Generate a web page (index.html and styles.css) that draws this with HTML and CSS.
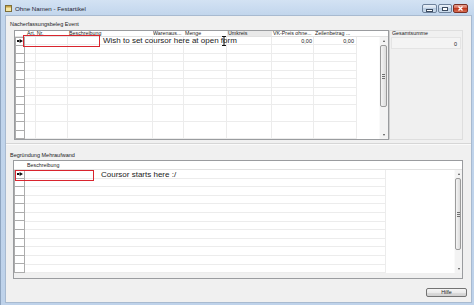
FILE: index.html
```html
<!DOCTYPE html>
<html lang="de">
<head>
    <meta charset="UTF-8">
    <title>Ohne Namen - Festartikel</title>
    <link rel="stylesheet" href="styles.css">
</head>
<body>
    <div class="window">
        <div class="titlebar">
            <svg class="app-icon" width="7" height="7" viewBox="0 0 7 7">
                <rect x="0.5" y="0.5" width="6" height="6" fill="#f5e6a4" stroke="#7d6f3a"/>
                <rect x="1" y="1" width="5" height="1.5" fill="#c7a244"/>
            </svg>
            <span class="title">Ohne Namen - Festartikel</span>
            <div class="caption-buttons">
                <span class="cap cap-min"></span>
                <span class="cap cap-max"></span>
                <span class="cap cap-close">
                    <svg width="5" height="5" viewBox="0 0 5 5"><path d="M0.5 0.5 L4.5 4.5 M4.5 0.5 L0.5 4.5" stroke="#fff" stroke-width="1.3"/></svg>
                </span>
            </div>
        </div>

        <div class="client">
            <div class="group-label first">Nacherfassungsbeleg Event</div>
            <div class="top-row">
                <div class="grid grid-events">
                    <div class="grid-head">
                        <span class="h-rh"></span>
                        <span class="h-art">Art. Nr.</span>
                        <span class="h-desc">Beschreibung</span>
                        <span class="h-ware">Warenaus...</span>
                        <span class="h-menge">Menge</span>
                        <span class="h-umkreis">Umkreis</span>
                        <span class="h-vk">VK-Preis ohne...</span>
                        <span class="h-zeile">Zeilenbetrag ...</span>
                        <span class="h-rest"></span>
                    </div>
                    <div class="grid-main">
                        <div class="rows">
                            <div class="rh-col">
                                <div class="rh current">
                                    <svg width="6" height="4" viewBox="0 0 6 4"><path d="M0 1h2.2v2H0z M2.6 0 L6 2 L2.6 4z" fill="#111"/></svg>
                                </div>
                                <div class="rh"></div><div class="rh"></div><div class="rh"></div>
                                <div class="rh"></div><div class="rh"></div><div class="rh"></div>
                                <div class="rh"></div><div class="rh"></div><div class="rh"></div>
                                <div class="rh"></div><div class="rh"></div>
                            </div>
                            <div class="col c1"></div>
                            <div class="col c2"></div>
                            <div class="col c3"></div>
                            <div class="col c4"></div>
                            <div class="col c5"></div>
                            <div class="col c6"></div>
                            <div class="col c7"><div class="val">0,00</div></div>
                            <div class="col c8"><div class="val">0,00</div></div>
                            <div class="col c9"></div>
                        </div>
                        <div class="vscroll">
                            <div class="vs-arrow up"></div>
                            <div class="vs-thumb"></div>
                            <div class="vs-track"></div>
                            <div class="vs-arrow down"></div>
                        </div>
                    </div>
                </div>
                <div class="sum-panel">
                    <div class="sum-label">Gesamtsumme</div>
                    <div class="sum-field">0</div>
                </div>
            </div>

            <div class="separator"></div>

            <div class="group-label second">Begründung Mehraufwand</div>
            <div class="grid grid-reason">
                <div class="grid-head">
                    <span class="h-rh"></span>
                    <span class="h-text">Beschreibung</span>
                    <span class="h-rest"></span>
                </div>
                <div class="grid-main">
                    <div class="rows">
                        <div class="rh-col">
                            <div class="rh current">
                                <svg width="6" height="4" viewBox="0 0 6 4"><path d="M0 1h2.2v2H0z M2.6 0 L6 2 L2.6 4z" fill="#111"/></svg>
                            </div>
                            <div class="rh"></div><div class="rh"></div><div class="rh"></div>
                            <div class="rh"></div><div class="rh"></div><div class="rh"></div>
                            <div class="rh"></div><div class="rh"></div><div class="rh"></div>
                            <div class="rh"></div><div class="rh"></div>
                        </div>
                        <div class="col text-col"></div>
                        <div class="col c9"></div>
                    </div>
                    <div class="vscroll">
                        <div class="vs-arrow up"></div>
                        <div class="vs-thumb"></div>
                        <div class="vs-track"></div>
                        <div class="vs-arrow down"></div>
                    </div>
                </div>
                <div class="grid-tail"></div>
            </div>

            <div class="footer">
                <button class="btn">Hilfe</button>
            </div>
        </div>

        <!-- annotations drawn over the form -->
        <div class="note-box note-box-top"></div>
        <div class="note note-top">Wish to set coursor here at open form</div>
        <svg class="ibeam" width="4" height="10" viewBox="0 0 4 10">
            <path d="M0 0.5h4 M0 9.5h4 M2 0.5v9" stroke="#111" stroke-width="1"/>
        </svg>
        <div class="note-box note-box-reason"></div>
        <div class="note note-reason">Coursor starts here :/</div>
    </div>
</body>
</html>
```

FILE: styles.css
```css
body {
    margin: 0;
    font-family: "Liberation Sans", Arial, sans-serif;
    background-color: #c6d8ee;
}
.window {
    position: relative;
    width: 474px;
    height: 305px;
    display: flex;
    flex-direction: column;
    background: linear-gradient(to bottom, #d3e2f3, #c1d5ec 16px, #bed2ea);
    box-shadow: inset 1px 0 0 #8fa5c0;
    overflow: hidden;
}

/* title bar */
.titlebar {
    height: 16px;
    display: flex;
    align-items: center;
    padding: 0 6px 0 5px;
    box-sizing: border-box;
}
.app-icon {
    margin-right: 3px;
}
.title {
    font-size: 6.2px;
    color: #1e2430;
}
.caption-buttons {
    display: flex;
    gap: 1px;
    margin-left: auto;
    align-self: flex-start;
    margin-top: 4px;
}
.cap {
    height: 9px;
    box-sizing: border-box;
    border: 1px solid #6d819b;
    border-radius: 2px;
    background: linear-gradient(to bottom, #eaf1f9, #cfdcec 50%, #b9cce1 50%, #cddcec);
    display: flex;
    align-items: center;
    justify-content: center;
}
.cap-min {
    width: 15px;
}
.cap-min::before {
    content: "";
    width: 5px;
    height: 1px;
    margin-top: 3px;
    background: #fff;
    border: 1px solid #3c4b60;
}
.cap-max {
    width: 14px;
}
.cap-max::before {
    content: "";
    width: 4px;
    height: 2px;
    background: #fff;
    border: 1px solid #3c4b60;
    border-top-width: 1.5px;
}
.cap-close {
    width: 15px;
    border-color: #7a2f24;
    background: linear-gradient(to bottom, #e9a898, #d35d4b 50%, #c1391f 50%, #d66d52);
}

/* client area */
.client {
    flex: 1;
    margin: 0 3px 3px 6px;
    background-color: #f0f0f0;
    box-shadow: 0 0 0 1px #a8bad0;
    display: flex;
    flex-direction: column;
}
.group-label {
    font-size: 5.5px;
    line-height: 8px;
    height: 8px;
    padding-left: 4px;
    color: #222;
}
.group-label.first {
    margin-top: 4px;
    margin-bottom: 2px;
}
.group-label.second {
    margin-top: 6px;
    margin-bottom: 1px;
}
.top-row {
    display: flex;
    margin-left: 8px;
    height: 110px;
}
.separator {
    margin-top: 3px;
    border-top: 1px solid #d6d6d6;
    border-bottom: 1px solid #fafafa;
}

/* grids */
.grid {
    box-sizing: border-box;
    border: 1px solid #9a9c9f;
    background-color: #f0f0f0;
    display: flex;
    flex-direction: column;
    font-size: 5.3px;
    color: #222;
}
.grid-events {
    width: 375px;
}
.grid-reason {
    width: 450px;
    height: 119px;
    margin-left: 7px;
}
.grid-head {
    display: flex;
    background-color: #fff;
    border-bottom: 1px solid #e2e2e2;
    box-sizing: border-box;
    white-space: nowrap;
}
.grid-events .grid-head {
    height: 6px;
    line-height: 5px;
}
.grid-reason .grid-head {
    height: 9px;
    line-height: 8px;
}
.grid-head span {
    overflow: hidden;
    flex-shrink: 0;
}
.grid-events .h-rh { width: 10px; }
.h-art { width: 43px; padding-left: 2px; box-sizing: border-box; }
.h-desc { width: 85px; padding-left: 1px; box-sizing: border-box; }
.h-ware { width: 31px; }
.h-menge { width: 43px; padding-left: 1px; box-sizing: border-box; }
.h-umkreis { width: 45px; padding-left: 1px; box-sizing: border-box; background-color: #e9e9e9; }
.h-vk { width: 42px; padding-left: 1px; box-sizing: border-box; }
.h-zeile { width: 43px; padding-left: 1px; box-sizing: border-box; }
.grid-reason .h-rh { width: 11px; }
.h-text { width: 361px; padding-left: 2px; box-sizing: border-box; }
.h-rest { flex: 1; }

.grid-main {
    display: flex;
}
.grid-events .grid-main {
    height: 102px;
}
.grid-reason .grid-main {
    height: 103px;
}
.grid-tail {
    flex: 1;
}
.rows {
    flex: 1;
    display: flex;
    background-color: #fff;
}
.grid-events .rows {
    background: repeating-linear-gradient(to bottom, #fff 0, #fff 7.5px, #ececec 7.5px, #ececec 8.5px);
}
.grid-reason .rows {
    background: repeating-linear-gradient(to bottom, #fff 0, #fff 7.6px, #ececec 7.6px, #ececec 8.6px);
}
.rh-col {
    display: flex;
    flex-direction: column;
    background-color: #fff;
}
.grid-events .rh-col { width: 10px; }
.grid-reason .rh-col { width: 11px; }
.rh {
    box-sizing: border-box;
    border: 1px solid #acacac;
    border-top: none;
    display: flex;
    align-items: center;
    justify-content: center;
}
.grid-events .rh { height: 8.5px; }
.grid-reason .rh { height: 8.6px; }
.rh.current {
    border-top: 1px solid #acacac;
}
.col {
    box-sizing: border-box;
    border-right: 1px solid #ececec;
}
.c1 { width: 11px; }
.c2 { width: 32px; }
.c3 { width: 85px; }
.c4 { width: 31px; }
.c5 { width: 43px; }
.c6 { width: 45px; }
.c7 { width: 42px; }
.c8 { width: 43px; }
.c9 { flex: 1; border-right: none; background-color: #fff; }
.text-col { width: 361px; }
.val {
    height: 8.5px;
    line-height: 8.5px;
    text-align: right;
    padding-right: 1px;
    font-size: 5.5px;
}
.c8 .val {
    padding-right: 2px;
}

/* scroll bars */
.vscroll {
    display: flex;
    flex-direction: column;
    background-color: #f3f3f3;
    box-sizing: border-box;
    border-left: 1px solid #fafafa;
}
.grid-events .vscroll { width: 9px; }
.grid-reason .vscroll { width: 8px; }
.vs-arrow {
    height: 8px;
    display: flex;
    align-items: center;
    justify-content: center;
}
.vs-arrow::before {
    content: "";
    border-left: 1.5px solid transparent;
    border-right: 1.5px solid transparent;
}
.vs-arrow.up::before {
    border-bottom: 2px solid #4f4f4f;
}
.vs-arrow.down::before {
    border-top: 2px solid #4f4f4f;
}
.vs-thumb {
    margin: 0 1px 0 0;
    box-sizing: border-box;
    border: 1px solid #9b9b9b;
    border-radius: 2px;
    background: linear-gradient(to right, #f4f4f4, #dcdcdc);
    display: flex;
    align-items: center;
    justify-content: center;
}
.vs-thumb::before {
    content: "";
    width: 3px;
    height: 5px;
    background: repeating-linear-gradient(to bottom, #707070 0, #707070 1px, transparent 1px, transparent 2px);
}
.grid-events .vs-thumb { height: 62px; }
.grid-reason .vs-thumb { height: 72px; }
.vs-track {
    flex: 1;
}

/* total panel */
.sum-panel {
    width: 74px;
    box-sizing: border-box;
    border: 1px solid #dedede;
    border-left-color: #cfcfcf;
    padding: 0 1px;
}
.sum-label {
    font-size: 5.3px;
    line-height: 5px;
    padding-left: 1px;
    color: #222;
}
.sum-field {
    margin-top: 1px;
    height: 12px;
    line-height: 12px;
    box-sizing: border-box;
    border: 1px solid #e4e4e4;
    background-color: #f4f4f4;
    text-align: right;
    padding-right: 3px;
    font-size: 5.5px;
    color: #222;
}

/* footer */
.footer {
    display: flex;
    justify-content: flex-end;
    padding: 9px 4px 0 0;
}
.btn {
    width: 41px;
    height: 9px;
    padding: 0;
    box-sizing: border-box;
    border: 1px solid #737373;
    border-radius: 2px;
    background: linear-gradient(to bottom, #f4f4f4, #ebebeb 50%, #dddddd 50%, #d0d0d0);
    font-family: "Liberation Sans", Arial, sans-serif;
    font-size: 5.3px;
    line-height: 7px;
    color: #222;
}

/* annotations */
.note-box {
    position: absolute;
    box-sizing: border-box;
    border: 1.5px solid #d9252e;
}
.note-box-top {
    left: 23px;
    top: 35px;
    width: 77px;
    height: 12px;
}
.note-box-reason {
    left: 15px;
    top: 170px;
    width: 79px;
    height: 11px;
}
.note {
    position: absolute;
    font-size: 8px;
    line-height: 10px;
    color: #1a1a1a;
    white-space: nowrap;
}
.note-top {
    left: 103px;
    top: 36px;
}
.note-reason {
    left: 101px;
    top: 170px;
}
.ibeam {
    position: absolute;
    left: 222px;
    top: 36px;
}
```
